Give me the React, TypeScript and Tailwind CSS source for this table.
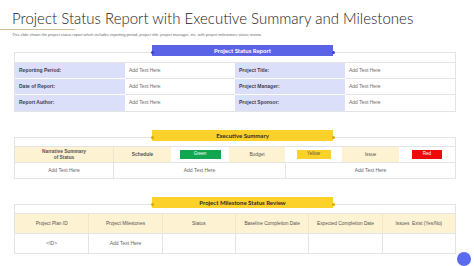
import React from "react";

const LF = { fontFamily: "'Liberation Sans', Arial, sans-serif" };
const TF = { fontFamily: "Lato, 'Open Sans', sans-serif" };

function Bar({ label, color, dot, text }: { label: string; color: string; dot: string; text: string }) {
  return (
    <div
      className={`absolute left-[137px] top-[-8px] w-[181px] h-[11px] flex items-center justify-center ${color}`}
      style={TF}
    >
      <span className={`absolute left-[-1.5px] top-[6px] w-[3px] h-[3px] rounded-full ${dot}`} />
      <span className={`absolute right-[-1.5px] top-[6px] w-[3px] h-[3px] rounded-full ${dot}`} />
      <span className={`text-[6px] font-bold leading-none ${text}`}>{label}</span>
    </div>
  );
}

export default function App() {
  const rows1 = [
    ["Reporting Period:", "Project Title:"],
    ["Date of Report:", "Project Manager:"],
    ["Report Author:", "Project Sponsor:"],
  ];
  const ms = [
    "Project Plan ID",
    "Project Milestones",
    "Status",
    "Baseline Completion Date",
    "Expected Completion Date",
    "Issues  Exist (Yes/No)",
  ];
  return (
    <div className="relative w-[474px] h-[266px] bg-white overflow-hidden flex flex-col" style={LF}>
      <div className="pt-[8px] pl-[12px] h-[29px]">
        <div className="text-[15px] font-light leading-[21px] text-[#1a1a1a] whitespace-nowrap" style={TF}>
          Project Status Report with Executive Summary and Milestones
        </div>
      </div>
      <div className="h-px w-[75px] bg-[#cdbf9c]" />
      <div className="mt-[2px] pl-[12px] h-[5px] leading-[5px] text-[3.9px] text-[#6b6b6b] whitespace-nowrap">
        This slide shows the project status report which includes reporting period, project title, project manager, etc. with project milestones status review.
      </div>

      {/* Section 1 */}
      <div className="relative mt-[15px] ml-[14px] w-[442px] border border-[#e4e4e4] pt-[9px]">
        <Bar label="Project Status Report" color="bg-[#5a63e6]" dot="bg-[#3a41b8]" text="text-white" />
        <div className="grid grid-cols-4 border-t border-[#e4e4e4]">
          {rows1.map((r, i) => (
            <React.Fragment key={i}>
              <div className={`h-[16px] flex items-center pl-[4px] bg-[#dcdff9] ${i < 2 ? "border-b border-white" : ""}`}>
                <span className="text-[5px] font-bold text-[#3d3d55]">{r[0]}</span>
              </div>
              <div className={`h-[16px] flex items-center pl-[4px] bg-white ${i < 2 ? "border-b border-[#e4e4e4]" : ""}`}>
                <span className="text-[5px] text-[#6a6a6a]">Add Text Here</span>
              </div>
              <div className={`h-[16px] flex items-center pl-[4px] bg-[#dcdff9] ${i < 2 ? "border-b border-white" : ""}`}>
                <span className="text-[5px] font-bold text-[#3d3d55]">{r[1]}</span>
              </div>
              <div className={`h-[16px] flex items-center pl-[4px] bg-white ${i < 2 ? "border-b border-[#e4e4e4]" : ""}`}>
                <span className="text-[5px] text-[#6a6a6a]">Add Text Here</span>
              </div>
            </React.Fragment>
          ))}
        </div>
      </div>

      {/* Section 2 */}
      <div className="relative mt-[25px] ml-[14px] w-[442px] border border-[#e4e4e4] pt-[8px]">
        <Bar label="Executive Summary" color="bg-[#fcd12a]" dot="bg-[#d9a800]" text="text-[#2a2a2a]" />
        <div className="grid grid-cols-[98px_58px_58px_56px_57px_57px_56px] border-t border-[#e4e4e4]">
          <div className="h-[15px] flex items-center justify-center text-center bg-[#fdf2d2] text-[4.8px] leading-[5.5px] font-bold text-[#555]">
            Narrative Summary<br />of Status
          </div>
          <div className="h-[15px] flex items-center justify-center bg-[#fdf2d2] border-l border-[#ece4cc] text-[4.8px] font-bold text-[#555]">
            Schedule
          </div>
          <div className="h-[15px] flex items-center justify-center bg-white">
            <div className="w-[41px] h-[9px] bg-[#12a650] flex items-center justify-center text-[4.5px] text-white">Green</div>
          </div>
          <div className="h-[15px] flex items-center justify-center bg-[#fdf2d2] text-[4.8px] text-[#555]">Budget</div>
          <div className="h-[15px] flex items-center justify-center bg-white">
            <div className="w-[34px] h-[9px] bg-[#fcd12a] flex items-center justify-center text-[4.5px] text-[#555]">Yellow</div>
          </div>
          <div className="h-[15px] flex items-center justify-center bg-[#fdf2d2] text-[4.8px] text-[#555]">Issue</div>
          <div className="h-[15px] flex items-center justify-center bg-white">
            <div className="w-[30px] h-[9px] bg-[#ee0a0a] flex items-center justify-center text-[4.5px] text-white">Red</div>
          </div>
        </div>
        <div className="grid grid-cols-[98px_172px_170px] border-t border-[#e4e4e4]">
          <div className="h-[15px] flex items-center justify-center text-[5px] text-[#666]">Add Text Here</div>
          <div className="h-[15px] flex items-center justify-center text-[5px] text-[#666] border-l border-[#e4e4e4]">Add Text Here</div>
          <div className="h-[15px] flex items-center justify-center text-[5px] text-[#666] border-l border-[#e4e4e4]">Add Text Here</div>
        </div>
      </div>

      {/* Section 3 */}
      <div className="relative mt-[25px] ml-[14px] w-[442px] border border-[#e4e4e4] pt-[8px]">
        <Bar label="Project Milestone Status Review" color="bg-[#fcd12a]" dot="bg-[#d9a800]" text="text-[#2a2a2a]" />
        <div className="grid grid-cols-6 border-t border-[#e4e4e4]">
          {ms.map((m, i) => (
            <div
              key={i}
              className={`h-[19px] flex items-center justify-center bg-[#fdf2d2] text-[4.8px] text-[#555] whitespace-pre ${i > 0 ? "border-l border-[#f0e6c8]" : ""}`}
            >
              {m}
            </div>
          ))}
        </div>
        <div className="grid grid-cols-6 border-t border-[#e4e4e4]">
          {ms.map((_, i) => (
            <div
              key={i}
              className={`h-[19px] flex items-center justify-center text-[5px] text-[#666] ${i > 0 ? "border-l border-[#e4e4e4]" : ""}`}
            >
              {i === 0 ? "<ID>" : i === 1 ? "Add Text Here" : ""}
            </div>
          ))}
        </div>
      </div>

      <div className="absolute left-[457px] top-[252px] w-[14px] h-[14px] rounded-full bg-[#5b6bef]" />
    </div>
  );
}
